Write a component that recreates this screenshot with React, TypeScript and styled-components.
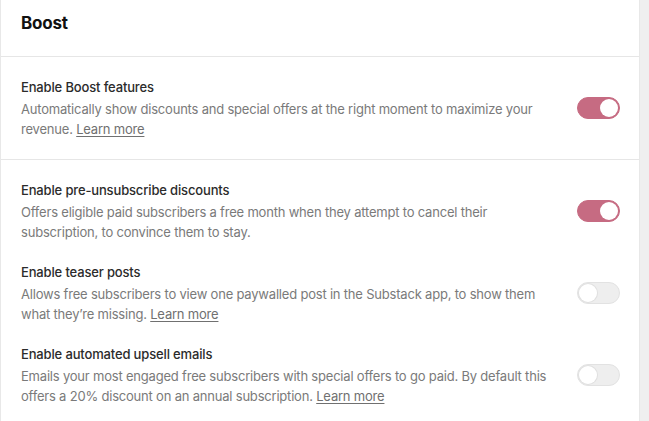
import { useState } from 'react'
import styled, { createGlobalStyle } from 'styled-components'

const GlobalStyle = createGlobalStyle`
  html, body {
    margin: 0;
    padding: 0;
    background: #efefef;
  }
  body {
    font-family: Inter, "Noto Sans", sans-serif;
    -webkit-font-smoothing: antialiased;
  }
`

const Card = styled.div`
  width: 638px;
  min-height: 421px;
  background: #ffffff;
  border-left: 1px solid #e8e8e8;
  border-right: 1px solid #e8e8e8;
`

const Header = styled.div`
  padding: 11px 20px 21px;
  border-bottom: 1px solid #e6e6e6;
  h2 {
    margin: 0;
    font-size: 17px;
    line-height: 24px;
    font-weight: 700;
    color: #111;
    letter-spacing: -0.2px;
  }
`

const Section = styled.div<{ $divider?: boolean }>`
  display: flex;
  flex-direction: column;
  gap: 20px;
  padding: 20px 19px 20px 20px;
  border-bottom: ${(p) => (p.$divider ? '1px solid #e6e6e6' : 'none')};
`

const Row = styled.div`
  display: flex;
  align-items: center;
  gap: 12px;
`

const Text = styled.div`
  flex: 1;
  min-width: 0;
`

const Title = styled.div`
  font-size: 13px;
  line-height: 20px;
  font-weight: 500;
  color: #2b2b2b;
  margin-bottom: 2px;
  letter-spacing: -0.15px;
`

const Desc = styled.div`
  font-size: 13px;
  line-height: 20px;
  color: #7a7a7a;
  letter-spacing: -0.2px;
  span {
    white-space: nowrap;
  }
  a {
    color: #707070;
    text-decoration: underline;
    text-underline-offset: 2px;
  }
`

const Switch = styled.button<{ $on: boolean }>`
  flex: none;
  position: relative;
  width: 43px;
  height: 22px;
  padding: 0;
  border-radius: 11px;
  border: 1px solid ${(p) => (p.$on ? '#c66b82' : '#e2e2e2')};
  background: ${(p) => (p.$on ? '#c66b82' : '#eeeeee')};
  cursor: pointer;
  &::after {
    content: '';
    position: absolute;
    top: 1px;
    left: ${(p) => (p.$on ? '22px' : '1px')};
    width: 18px;
    height: 18px;
    border-radius: 50%;
    background: #fff;
    box-shadow: ${(p) => (p.$on ? 'none' : '0 0 0 1px #e0e0e0')};
  }
`

type Item = {
  title: string
  lines: string[]
  link?: boolean
  on: boolean
}

const boostItem: Item = {
  title: 'Enable Boost features',
  lines: ['Automatically show discounts and special offers at the right moment to maximize your', 'revenue.'],
  link: true,
  on: true,
}

const items: Item[] = [
  {
    title: 'Enable pre-unsubscribe discounts',
    lines: ['Offers eligible paid subscribers a free month when they attempt to cancel their', 'subscription, to convince them to stay.'],
    on: true,
  },
  {
    title: 'Enable teaser posts',
    lines: ['Allows free subscribers to view one paywalled post in the Substack app, to show them', 'what they\u2019re missing.'],
    link: true,
    on: false,
  },
  {
    title: 'Enable automated upsell emails',
    lines: ['Emails your most engaged free subscribers with special offers to go paid. By default this', 'offers a 20% discount on an annual subscription.'],
    link: true,
    on: false,
  },
]

function Setting({ item }: { item: Item }) {
  const [on, setOn] = useState(item.on)
  return (
    <Row>
      <Text>
        <Title>{item.title}</Title>
        <Desc>
          <span>{item.lines[0]}</span>
          <br />
          <span>
            {item.lines[1]}
            {item.link && (
              <>
                {' '}
                <a href='#'>Learn more</a>
              </>
            )}
          </span>
        </Desc>
      </Text>
      <Switch $on={on} onClick={() => setOn(!on)} aria-pressed={on} />
    </Row>
  )
}

export default function App() {
  return (
    <>
      <GlobalStyle />
      <Card>
        <Header>
          <h2>Boost</h2>
        </Header>
        <Section $divider>
          <Setting item={boostItem} />
        </Section>
        <Section>
          {items.map((item) => (
            <Setting key={item.title} item={item} />
          ))}
        </Section>
      </Card>
    </>
  )
}
